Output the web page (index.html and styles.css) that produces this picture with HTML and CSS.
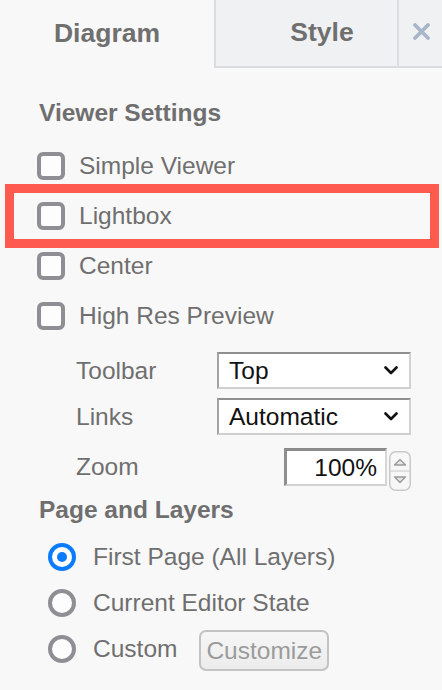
FILE: index.html
```html
<!DOCTYPE html>
<html lang="en">
<head>
<meta charset="utf-8">
<title>Format panel</title>
<link rel="stylesheet" href="styles.css">
</head>
<body>
<div class="panel">
  <div class="tabs">
    <div class="tab tab-active">Diagram</div>
    <div class="tab tab-inactive">Style</div>
    <div class="tab-close" title="Close">
      <svg width="17" height="17" viewBox="0 0 17 17"><path d="M2 2 L15 15 M15 2 L2 15" stroke="#a9b5c8" stroke-width="3.8" stroke-linecap="round"/></svg>
    </div>
  </div>

  <div class="section-title first">Viewer Settings</div>
  <div class="check-list">
    <div class="check-row"><span class="checkbox"></span><span class="label">Simple Viewer</span></div>
    <div class="check-row highlighted"><span class="checkbox"></span><span class="label">Lightbox</span><span class="highlight"></span></div>
    <div class="check-row"><span class="checkbox"></span><span class="label">Center</span></div>
    <div class="check-row"><span class="checkbox"></span><span class="label">High Res Preview</span></div>
  </div>

  <div class="form">
    <div class="form-row">
      <span class="form-label">Toolbar</span>
      <div class="select"><span>Top</span>
        <svg class="chev" width="14" height="9" viewBox="0 0 14 9"><path d="M1.5 1.5 L7 7 L12.5 1.5" fill="none" stroke="#111" stroke-width="2.6" stroke-linecap="round" stroke-linejoin="round"/></svg>
      </div>
    </div>
    <div class="form-row">
      <span class="form-label">Links</span>
      <div class="select"><span>Automatic</span>
        <svg class="chev" width="14" height="9" viewBox="0 0 14 9"><path d="M1.5 1.5 L7 7 L12.5 1.5" fill="none" stroke="#111" stroke-width="2.6" stroke-linecap="round" stroke-linejoin="round"/></svg>
      </div>
    </div>
    <div class="form-row zoom-row">
      <span class="form-label">Zoom</span>
      <div class="zoom-ctrl">
        <div class="zoom-input">100%</div>
        <div class="spinner">
          <svg width="22" height="40" viewBox="0 0 22 40">
            <rect x="0.75" y="0.75" width="20.5" height="38.5" rx="6" fill="#f7f7f7" stroke="#c9c9c9" stroke-width="1.5"/>
            <line x1="1" y1="20" x2="21" y2="20" stroke="#d0d0d0" stroke-width="1.2"/>
            <path d="M5.5 14 L11 8.5 L16.5 14 Z" fill="#e6e6e6" stroke="#9a9a9a" stroke-width="1.4" stroke-linejoin="round"/>
            <path d="M5.5 26 L11 31.5 L16.5 26 Z" fill="#e6e6e6" stroke="#9a9a9a" stroke-width="1.4" stroke-linejoin="round"/>
          </svg>
        </div>
      </div>
    </div>
  </div>

  <div class="section-title second">Page and Layers</div>
  <div class="radio-list">
    <div class="radio-row"><span class="radio checked"></span><span class="label">First Page (All Layers)</span></div>
    <div class="radio-row"><span class="radio"></span><span class="label">Current Editor State</span></div>
    <div class="radio-row"><span class="radio"></span><span class="label">Custom</span><span class="btn-customize">Customize</span></div>
  </div>
</div>
</body>
</html>
```

FILE: styles.css
```css
html, body {
  margin: 0;
  padding: 0;
}
body {
  width: 442px;
  height: 690px;
  overflow: hidden;
  background: #f8f8f8;
  font-family: "Liberation Sans", Arial, sans-serif;
  color: #6f6f6f;
}
.panel {
  width: 442px;
}
.tabs {
  position: relative;
  display: flex;
  height: 68px;
}
.tab {
  width: 214px;
  box-sizing: border-box;
  display: flex;
  align-items: center;
  justify-content: center;
  font-weight: bold;
  font-size: 26.5px;
  color: #6f6f6f;
  padding-bottom: 1px;
}
.tab-inactive {
  width: 228px;
  padding-right: 14px;
  background: #f0f1f3;
  border-left: 2px solid #dadce0;
  border-bottom: 2px solid #dadce0;
}
.tab-close {
  position: absolute;
  right: 0;
  top: 0;
  width: 43px;
  height: 43px;
  padding-top: 23px;
  background: #f0f1f3;
  border-left: 2px solid #dadce0;
  border-bottom: 2px solid #dadce0;
  display: flex;
  justify-content: center;
  align-items: flex-start;
}
.tab-close svg {
  margin-left: 1px;
}
.section-title {
  font-weight: bold;
  font-size: 24.5px;
  line-height: 30px;
  padding-left: 39px;
  color: #6f6f6f;
}
.section-title.first {
  margin-top: 30px;
}
.section-title.second {
  margin-top: 4px;
}
.check-list {
  margin-top: 13px;
}
.check-row {
  position: relative;
  height: 50px;
  display: flex;
  align-items: center;
  padding-left: 37px;
}
.checkbox {
  width: 28px;
  height: 28px;
  box-sizing: border-box;
  border: 4px solid #8e8e94;
  border-radius: 6px;
  background: #fdfdfd;
  flex: none;
}
.label {
  font-size: 24.5px;
  line-height: 30px;
  color: #6f6f6f;
}
.check-row .label {
  margin-left: 14px;
}
.highlight {
  position: absolute;
  left: 5px;
  top: -7px;
  width: 434px;
  height: 64px;
  box-sizing: border-box;
  border: 9px solid #fe5a4f;
  pointer-events: none;
}
.form {
  margin-top: 11px;
  padding-left: 76px;
}
.form-row {
  display: flex;
  align-items: center;
  height: 37px;
  margin-bottom: 9px;
}
.form-label {
  width: 141px;
  font-size: 24.5px;
  color: #6f6f6f;
  flex: none;
}
.select {
  width: 194px;
  height: 37px;
  box-sizing: border-box;
  border-top: 2px solid #8f8f8f;
  border-left: 2px solid #a3a3a3;
  border-right: 2px solid #d2d2d2;
  border-bottom: 2px solid #cfcfcf;
  background: #fff;
  display: flex;
  align-items: center;
  justify-content: space-between;
  padding: 0 11px 0 10px;
  font-size: 24.5px;
  color: #111;
}
.zoom-row {
  margin-top: 13px;
  margin-bottom: 0;
  height: 43px;
  align-items: flex-start;
}
.zoom-row .form-label {
  margin-top: 5px;
}
.zoom-ctrl {
  display: flex;
  align-items: flex-start;
  margin-left: 67px;
}
.zoom-input {
  width: 103px;
  height: 38px;
  box-sizing: border-box;
  border-top: 3px solid #8a8a8a;
  border-left: 3px solid #8f8f8f;
  border-right: 2px solid #d6d6d6;
  border-bottom: 2px solid #d2d2d2;
  background: #fff;
  text-align: right;
  padding-right: 8px;
  font-size: 24.5px;
  line-height: 33px;
  color: #111;
}
.spinner {
  margin-left: 2px;
  margin-top: 3px;
  height: 40px;
}
.spinner svg {
  display: block;
}
.radio-list {
  margin-top: 9px;
}
.radio-row {
  height: 46px;
  display: flex;
  align-items: center;
  padding-left: 48px;
}
.radio {
  width: 28px;
  height: 28px;
  box-sizing: border-box;
  border: 4px solid #8e8e94;
  border-radius: 50%;
  background: #fdfdfd;
  flex: none;
  position: relative;
}
.radio.checked {
  border-color: #0b7cff;
  background: #fff;
}
.radio.checked::after {
  content: "";
  position: absolute;
  left: 5px;
  top: 5px;
  width: 10px;
  height: 10px;
  border-radius: 50%;
  background: #0b7cff;
}
.radio-row .label {
  margin-left: 17px;
}
.btn-customize {
  margin-left: 22px;
  height: 41px;
  box-sizing: border-box;
  padding: 0 5px;
  border: 2px solid #c3c3c3;
  border-radius: 7px;
  background: linear-gradient(#f6f6f6, #ececec);
  color: #9b9b9b;
  font-size: 24.5px;
  line-height: 37px;
  margin-top: 2px;
}
```
